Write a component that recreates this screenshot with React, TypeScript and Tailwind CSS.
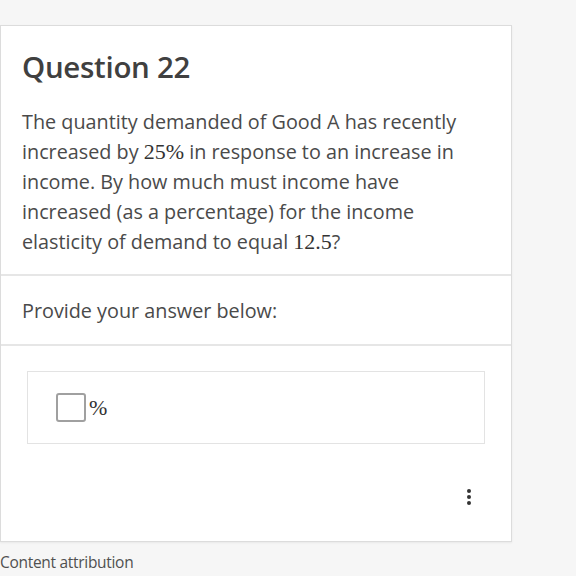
import React from "react";

const sans = { fontFamily: '"Open Sans", "Noto Sans", sans-serif' };

function M({ children }: { children: React.ReactNode }) {
  return (
    <span className="font-['Liberation_Serif',serif] text-[22px] leading-none text-[#333]">{children}</span>
  );
}

export default function App() {
  return (
    <div className="min-h-[576px] w-[576px] bg-[#f6f6f6] pt-[25px]" style={sans}>
      <div className="w-[512px] border border-[#dcdcdc] bg-white shadow-[0_1px_2px_rgba(0,0,0,0.06)]">
        {/* 문제 본문 */}
        <div className="px-[21px] pt-[22px] pb-[17px]">
          <h2 className="text-[29.5px] leading-[38px] font-semibold tracking-[-0.3px] text-[#404040]">
            Question 22
          </h2>
          <p className="mt-[21px] text-[19.8px] leading-[30px] text-[#4a4a4a]">
            The quantity demanded of Good A has recently increased by <M>25%</M> in response to an
            increase in income. By how much must income have increased (as a percentage) for the
            income elasticity of demand to equal <M>12.5</M>?
          </p>
        </div>

        <div className="border-t-2 border-[#e6e6e6] px-[21px] pt-[20px] pb-[18px]">
          <p className="text-[19.8px] leading-[30px] text-[#4a4a4a]">Provide your answer below:</p>
        </div>

        {/* 답안 입력 */}
        <div className="border-t-2 border-[#e6e6e6] px-[26px] pt-[25px] pb-[36px]">
          <div className="flex h-[73px] items-center border border-[#e3e3e3] px-[28px]">
            <div className="h-[29px] w-[30px] rounded-[3px] border-2 border-[#a0a0a0] bg-white" />
            <span className="ml-[3px] font-['Liberation_Serif',serif] text-[22px] text-[#333]">%</span>
          </div>
          <div className="mt-[45px] flex justify-end pr-[14px]">
            <div className="flex flex-col gap-[2px]">
              <span className="h-[4px] w-[4px] rounded-full bg-[#333]" />
              <span className="h-[4px] w-[4px] rounded-full bg-[#333]" />
              <span className="h-[4px] w-[4px] rounded-full bg-[#333]" />
            </div>
          </div>
        </div>
      </div>
      <p className="mt-[10px] text-[15.5px] leading-[20px] tracking-[-0.3px] text-[#505050]">Content attribution</p>
    </div>
  );
}
